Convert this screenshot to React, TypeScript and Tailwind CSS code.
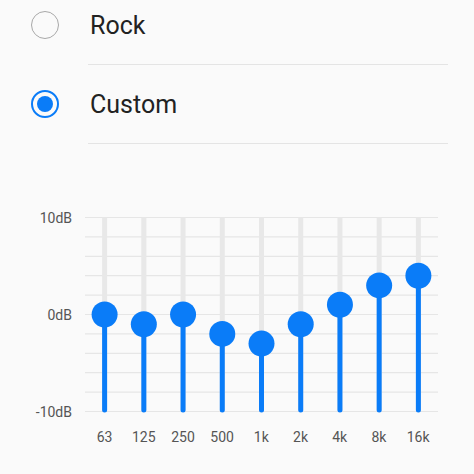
import React from "react";

const BLUE = "#0a7cf8";
const bands = [
  { label: "63", db: 0 },
  { label: "125", db: -1 },
  { label: "250", db: 0 },
  { label: "500", db: -2 },
  { label: "1k", db: -3 },
  { label: "2k", db: -1 },
  { label: "4k", db: 1 },
  { label: "8k", db: 3 },
  { label: "16k", db: 4 },
];

const W = 353;
const H = 197;
const COL = W / 9;
const TOP = 1.5;
const STEP = 19.4;
const yFor = (db: number) => TOP + (10 - db) * (STEP / 2);

function Chart() {
  return (
    <svg width={W} height={H} viewBox={`0 0 ${W} ${H}`} className="block overflow-visible">
      {Array.from({ length: 11 }).map((_, i) => (
        <line key={i} x1={0} x2={W} y1={TOP + i * STEP} y2={TOP + i * STEP} stroke="#e6e6e6" strokeWidth={1.2} />
      ))}
      {bands.map((b, i) => {
        const x = COL * i + COL / 2;
        const y = yFor(b.db);
        const bottom = TOP + 10 * STEP;
        return (
          <g key={b.label}>
            <line x1={x} x2={x} y1={TOP} y2={bottom} stroke="#e8e8e8" strokeWidth={5} />
            <line x1={x} x2={x} y1={y} y2={bottom - 1.5} stroke={BLUE} strokeWidth={5} strokeLinecap="round" />
            <circle cx={x} cy={y} r={13} fill={BLUE} />
          </g>
        );
      })}
    </svg>
  );
}

function Row({ label, selected, first }: { label: string; selected?: boolean; first?: boolean }) {
  return (
    <>
      <div className={`flex h-[78px] items-center pl-[31px] ${first ? "mt-[-14px]" : ""}`}>
        {selected ? (
          <div className="flex h-[28px] w-[28px] items-center justify-center rounded-full border-2 border-[#0a7cf8]">
            <div className="h-[16px] w-[16px] rounded-full bg-[#0a7cf8]" />
          </div>
        ) : (
          <div className="h-[28px] w-[28px] rounded-full border-[1.5px] border-[#a8a8a8]" />
        )}
        <span className="ml-[31px] text-[25px] leading-none text-[#222222]">{label}</span>
      </div>
      <div className="ml-[88px] h-px w-[360px] bg-[#e4e4e4]" />
    </>
  );
}

export default function App() {
  return (
    <div
      className="h-[474px] w-[474px] overflow-hidden bg-[#fafafa]"
      style={{ fontFamily: "Roboto, 'Noto Sans', sans-serif" }}
    >
      <Row label="Rock" first />
      <Row label="Custom" selected />
      <div className="mt-[72px] flex items-start">
        <div className="mt-[-6.5px] flex h-[210px] w-[72px] flex-col items-end justify-between text-[14px] leading-4 text-[#555555]">
          <span>10dB</span>
          <span>0dB</span>
          <span>-10dB</span>
        </div>
        <div className="ml-[13px] flex flex-col">
          <Chart />
          <div className="mt-[16px] flex">
            {bands.map((b) => (
              <div key={b.label} className="w-[39.2px] text-center text-[14px] leading-4 text-[#555555]">
                {b.label}
              </div>
            ))}
          </div>
        </div>
      </div>
    </div>
  );
}
